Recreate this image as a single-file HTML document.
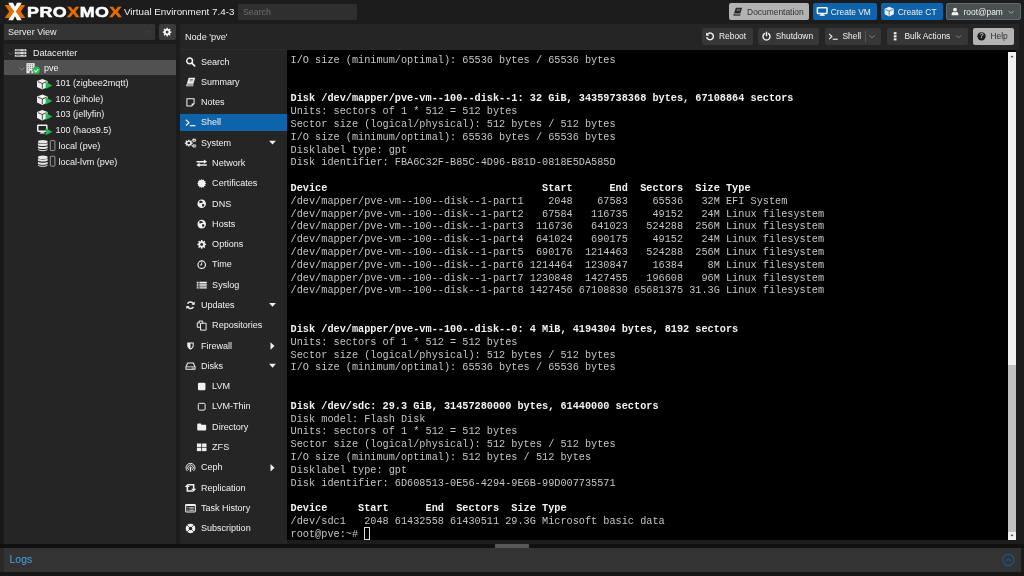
<!DOCTYPE html>
<html lang="en"><head><meta charset="utf-8"><title>pve - Proxmox Virtual Environment</title>
<style>
*{box-sizing:border-box;margin:0;padding:0}
html,body{width:1024px;height:576px;overflow:hidden;background:#1c1c1c}
body{position:relative;font-family:"Liberation Sans",Arial,sans-serif;font-size:9.05px;color:#f2f2f2;line-height:1}
.abs{position:absolute}
.t{position:absolute;white-space:pre;line-height:12px;height:12px}
.btn{position:absolute;border-radius:2px;height:16.5px}
.term{position:absolute;white-space:pre;font-family:"Liberation Mono","Courier New",monospace;font-size:10.22px;line-height:13px;height:13px;color:#c6c6c6;left:290.6px}
.term b{font-weight:bold;color:#f4f4f4}
svg{position:absolute;overflow:visible}
</style></head>
<body>
<div id="app" style="position:absolute;left:0;top:0;width:1024px;height:576px;will-change:transform;opacity:0.999">
<div class="abs" style="left:0px;top:23.5px;width:3.3px;height:521px;background:#191919;"></div>
<div class="abs" style="left:238px;top:3.5px;width:119px;height:16.5px;background:#303030;border-radius:1px"></div>
<div class="t" style="left:243px;top:6px;font-size:8.8px;color:#707070;">Search</div>
<div class="t" style="left:124px;top:5.5px;font-size:9.81px;color:#f0f0f0;">Virtual Environment 7.4-3</div>
<div class="abs" id="logo" style="left:27.3px;top:3.1px;height:18px;line-height:18px;font-size:15.4px;font-weight:bold;white-space:pre;letter-spacing:0.45px;-webkit-text-stroke:0.55px;transform-origin:0 50%;transform:scaleX(1.16);color:#fff">PRO<span style="color:#e57000">X</span>MO<span style="color:#e57000">X</span></div>
<div class="abs" style="left:3.5px;top:23.7px;width:151.5px;height:16.5px;background:#353535;border-radius:1px"></div>
<div class="t" style="left:8px;top:26px;font-size:9.05px;color:#efefef;">Server View</div>
<div class="abs" style="left:158.8px;top:23.9px;width:16.8px;height:16.5px;background:#3b3b3b;border-radius:2px"></div>
<div class="abs" style="left:3.5px;top:43.7px;width:172.5px;height:501.5px;background:#262626;"></div>
<div class="abs" style="left:3.5px;top:59.8px;width:172.5px;height:15.6px;background:#525252;"></div>
<div class="t" style="left:33px;top:47px;font-size:9.05px;color:#f2f2f2;">Datacenter</div>
<div class="t" style="left:44px;top:61.8px;font-size:9.05px;color:#f2f2f2;">pve</div>
<div class="t" style="left:55.5px;top:77.3px;font-size:9.05px;color:#f2f2f2;">101 (zigbee2mqtt)</div>
<div class="t" style="left:55.5px;top:92.8px;font-size:9.05px;color:#f2f2f2;">102 (pihole)</div>
<div class="t" style="left:55.5px;top:108.3px;font-size:9.05px;color:#f2f2f2;">103 (jellyfin)</div>
<div class="t" style="left:55.5px;top:123.80000000000001px;font-size:9.05px;color:#f2f2f2;">100 (haos9.5)</div>
<div class="t" style="left:58.5px;top:140px;font-size:9.05px;color:#f2f2f2;">local (pve)</div>
<div class="t" style="left:58.5px;top:155.6px;font-size:9.05px;color:#f2f2f2;">local-lvm (pve)</div>
<div class="abs" style="left:179.6px;top:23.9px;width:839.7px;height:26px;background:#262626;"></div>
<div class="t" style="left:184.9px;top:30.6px;font-size:9.16px;color:#f0f0f0;">Node &#x27;pve&#x27;</div>
<div class="abs" style="left:179.6px;top:49.5px;width:107.2px;height:494.9px;background:#262626;"></div>
<div class="abs" style="left:179.6px;top:49.3px;width:107.2px;height:0.8px;background:#2d2d2d;"></div>
<div class="abs" style="left:286.8px;top:49.8px;width:729.4px;height:490.2px;background:#000;"></div>
<div class="abs" style="left:179.5px;top:114.1px;width:107.3px;height:16.6px;background:#0f65ab;"></div>
<div class="t" style="left:200.9px;top:55.5px;font-size:9.05px;color:#f2f2f2;">Search</div>
<div class="t" style="left:200.9px;top:75.78999999999999px;font-size:9.05px;color:#f2f2f2;">Summary</div>
<div class="t" style="left:200.9px;top:96.08px;font-size:9.05px;color:#f2f2f2;">Notes</div>
<div class="t" style="left:200.9px;top:116.37px;font-size:9.05px;color:#f2f2f2;">Shell</div>
<div class="t" style="left:200.9px;top:136.66px;font-size:9.05px;color:#f2f2f2;">System</div>
<div class="t" style="left:212.1px;top:156.95px;font-size:9.05px;color:#f2f2f2;">Network</div>
<div class="t" style="left:212.1px;top:177.24px;font-size:9.05px;color:#f2f2f2;">Certificates</div>
<div class="t" style="left:212.1px;top:197.53px;font-size:9.05px;color:#f2f2f2;">DNS</div>
<div class="t" style="left:212.1px;top:217.82px;font-size:9.05px;color:#f2f2f2;">Hosts</div>
<div class="t" style="left:212.1px;top:238.10999999999999px;font-size:9.05px;color:#f2f2f2;">Options</div>
<div class="t" style="left:212.1px;top:258.4px;font-size:9.05px;color:#f2f2f2;">Time</div>
<div class="t" style="left:212.1px;top:278.69px;font-size:9.05px;color:#f2f2f2;">Syslog</div>
<div class="t" style="left:200.9px;top:298.98px;font-size:9.05px;color:#f2f2f2;">Updates</div>
<div class="t" style="left:212.1px;top:319.27px;font-size:9.05px;color:#f2f2f2;">Repositories</div>
<div class="t" style="left:200.9px;top:339.56px;font-size:9.05px;color:#f2f2f2;">Firewall</div>
<div class="t" style="left:200.9px;top:359.84999999999997px;font-size:9.05px;color:#f2f2f2;">Disks</div>
<div class="t" style="left:212.1px;top:380.14px;font-size:9.05px;color:#f2f2f2;">LVM</div>
<div class="t" style="left:212.1px;top:400.43px;font-size:9.05px;color:#f2f2f2;">LVM-Thin</div>
<div class="t" style="left:212.1px;top:420.71999999999997px;font-size:9.05px;color:#f2f2f2;">Directory</div>
<div class="t" style="left:212.1px;top:441.01px;font-size:9.05px;color:#f2f2f2;">ZFS</div>
<div class="t" style="left:200.9px;top:461.29999999999995px;font-size:9.05px;color:#f2f2f2;">Ceph</div>
<div class="t" style="left:200.9px;top:481.59px;font-size:9.05px;color:#f2f2f2;">Replication</div>
<div class="t" style="left:200.9px;top:501.88px;font-size:9.05px;color:#f2f2f2;">Task History</div>
<div class="t" style="left:200.9px;top:522.17px;font-size:9.05px;color:#f2f2f2;">Subscription</div>
<div class="abs" style="left:729.2px;top:3.2px;width:80px;height:16.8px;background:#b4b4b4;border-radius:2px;"></div>
<div class="t" style="left:747.1px;top:5.800000000000001px;font-size:8.42px;color:#333;">Documentation</div>
<div class="abs" style="left:813.2px;top:3.2px;width:63.8px;height:16.8px;background:#1064ac;border-radius:2px;"></div>
<div class="t" style="left:830.7px;top:5.800000000000001px;font-size:8.42px;color:#f2f2f2;">Create VM</div>
<div class="abs" style="left:880.6px;top:3.2px;width:62.4px;height:16.8px;background:#1064ac;border-radius:2px;"></div>
<div class="t" style="left:897.8px;top:5.800000000000001px;font-size:8.42px;color:#f2f2f2;">Create CT</div>
<div class="abs" style="left:946.2px;top:3.3px;width:74.8px;height:16.8px;background:#495152;border-radius:2px;border:1px solid #626a6b;"></div>
<div class="t" style="left:963.5px;top:5.899999999999999px;font-size:8.42px;color:#f2f2f2;">root@pam</div>
<div class="abs" style="left:701.5px;top:28px;width:51px;height:16.5px;background:#383838;border-radius:2px;"></div>
<div class="t" style="left:719px;top:30.450000000000003px;font-size:8.42px;color:#f2f2f2;">Reboot</div>
<div class="abs" style="left:758px;top:28px;width:61px;height:16.5px;background:#383838;border-radius:2px;"></div>
<div class="t" style="left:775.7px;top:30.450000000000003px;font-size:8.42px;color:#f2f2f2;">Shutdown</div>
<div class="abs" style="left:825px;top:28px;width:55.6px;height:16.5px;background:#383838;border-radius:2px;"></div>
<div class="t" style="left:842.5px;top:30.450000000000003px;font-size:8.42px;color:#f2f2f2;">Shell</div>
<div class="abs" style="left:887px;top:28px;width:81px;height:16.5px;background:#383838;border-radius:2px;"></div>
<div class="t" style="left:904.5px;top:30.450000000000003px;font-size:8.42px;color:#f2f2f2;">Bulk Actions</div>
<div class="abs" style="left:973px;top:28px;width:41.2px;height:16.5px;background:#b4b4b4;border-radius:2px;"></div>
<div class="t" style="left:990.4px;top:30.450000000000003px;font-size:8.42px;color:#333;">Help</div>
<div class="abs" style="left:865.2px;top:30.5px;width:0.8px;height:11.5px;background:#5a5a5a;"></div>
<div class="t" style="left:979.3px;top:30.4px;font-size:7.6px;font-weight:bold;color:#b4b4b4;z-index:3">?</div>
<div class="abs" style="left:1007.9px;top:52.3px;width:8.3px;height:487.4px;background:#f1f1f1;"></div>
<div class="abs" style="left:1007.9px;top:364.6px;width:8.3px;height:167.2px;background:#c1c1c1;"></div>
<div class="abs" style="left:1007.9px;top:531.7px;width:8.3px;height:8px;background:#f1f1f1;"></div>
<div class="term" style="top:53.90px">I/O size (minimum/optimal): 65536 bytes / 65536 bytes</div>
<div class="term" style="top:92.33px"><b>Disk /dev/mapper/pve-vm--100--disk--1: 32 GiB, 34359738368 bytes, 67108864 sectors</b></div>
<div class="term" style="top:105.14px">Units: sectors of 1 * 512 = 512 bytes</div>
<div class="term" style="top:117.95px">Sector size (logical/physical): 512 bytes / 512 bytes</div>
<div class="term" style="top:130.76px">I/O size (minimum/optimal): 65536 bytes / 65536 bytes</div>
<div class="term" style="top:143.57px">Disklabel type: gpt</div>
<div class="term" style="top:156.38px">Disk identifier: FBA6C32F-B85C-4D96-B81D-0818E5DA585D</div>
<div class="term" style="top:182.00px"><b>Device                                   Start      End  Sectors  Size Type</b></div>
<div class="term" style="top:194.81px">/dev/mapper/pve-vm--100--disk--1-part1    2048    67583    65536   32M EFI System</div>
<div class="term" style="top:207.62px">/dev/mapper/pve-vm--100--disk--1-part2   67584   116735    49152   24M Linux filesystem</div>
<div class="term" style="top:220.43px">/dev/mapper/pve-vm--100--disk--1-part3  116736   641023   524288  256M Linux filesystem</div>
<div class="term" style="top:233.24px">/dev/mapper/pve-vm--100--disk--1-part4  641024   690175    49152   24M Linux filesystem</div>
<div class="term" style="top:246.05px">/dev/mapper/pve-vm--100--disk--1-part5  690176  1214463   524288  256M Linux filesystem</div>
<div class="term" style="top:258.86px">/dev/mapper/pve-vm--100--disk--1-part6 1214464  1230847    16384    8M Linux filesystem</div>
<div class="term" style="top:271.67px">/dev/mapper/pve-vm--100--disk--1-part7 1230848  1427455   196608   96M Linux filesystem</div>
<div class="term" style="top:284.48px">/dev/mapper/pve-vm--100--disk--1-part8 1427456 67108830 65681375 31.3G Linux filesystem</div>
<div class="term" style="top:322.91px"><b>Disk /dev/mapper/pve-vm--100--disk--0: 4 MiB, 4194304 bytes, 8192 sectors</b></div>
<div class="term" style="top:335.72px">Units: sectors of 1 * 512 = 512 bytes</div>
<div class="term" style="top:348.53px">Sector size (logical/physical): 512 bytes / 512 bytes</div>
<div class="term" style="top:361.34px">I/O size (minimum/optimal): 65536 bytes / 65536 bytes</div>
<div class="term" style="top:399.77px"><b>Disk /dev/sdc: 29.3 GiB, 31457280000 bytes, 61440000 sectors</b></div>
<div class="term" style="top:412.58px">Disk model: Flash Disk</div>
<div class="term" style="top:425.39px">Units: sectors of 1 * 512 = 512 bytes</div>
<div class="term" style="top:438.20px">Sector size (logical/physical): 512 bytes / 512 bytes</div>
<div class="term" style="top:451.01px">I/O size (minimum/optimal): 512 bytes / 512 bytes</div>
<div class="term" style="top:463.82px">Disklabel type: gpt</div>
<div class="term" style="top:476.63px">Disk identifier: 6D608513-0E56-4294-9E6B-99D007735571</div>
<div class="term" style="top:502.25px"><b>Device     Start      End  Sectors  Size Type</b></div>
<div class="term" style="top:515.06px">/dev/sdc1   2048 61432558 61430511 29.3G Microsoft basic data</div>
<div class="term" style="top:527.87px">root@pve:~# </div>
<div class="abs" style="left:363.7px;top:527px;width:6.6px;height:12.6px;background:transparent;border:1px solid #dcdcdc"></div>
<div class="abs" style="left:0px;top:544.4px;width:1024px;height:3.3px;background:#121212;"></div>
<div class="abs" style="left:0px;top:547.7px;width:3.5px;height:24.6px;background:#2a2a2a;"></div>
<div class="abs" style="left:3.5px;top:547.7px;width:1017px;height:24.6px;background:#343434;"></div>
<div class="abs" style="left:0px;top:572.3px;width:1024px;height:3.7px;background:#181818;"></div>
<div class="t" style="left:9.6px;top:554px;font-size:10.4px;color:#4aa3df;">Logs</div>
<div class="abs" style="left:494.8px;top:544.1px;width:34.2px;height:3.8px;background:#585858;border-radius:1px 1px 0 0;z-index:1"></div>
<svg style="left:0;top:0" width="1024" height="576" viewBox="0 0 1024 576">
<polygon points="8.3,2.8 13,2.8 21.7,20.3 17,20.3" fill="#ffffff"/>
<polygon points="21.7,2.8 17,2.8 8.3,20.3 13,20.3" fill="#ffffff"/>
<polygon points="4.7,5 9.7,5 14.2,11.5 9.7,18 4.7,18 9.2,11.5" fill="#e57000"/>
<polygon points="25.3,5 20.3,5 15.8,11.5 20.3,18 25.3,18 20.8,11.5" fill="#e57000"/>
<g transform="translate(7.50 50.40) scale(0.4000 0.4000)"><path d="M2 5L8 11L14 5" stroke="#686868" fill="none" stroke-width="1.8"/></g>
<g transform="translate(18.50 65.70) scale(0.4125 0.4125)"><path d="M2 5L8 11L14 5" stroke="#989898" fill="none" stroke-width="1.8"/></g>
<g transform="translate(14.30 48.46) scale(0.7875 0.5670)"><rect x="0.6" y="1.4" width="14.8" height="3.6" rx="0.6" fill="#dcdcdc"/><rect x="0.6" y="6.2" width="14.8" height="3.6" rx="0.6" fill="#dcdcdc"/><rect x="0.6" y="11" width="14.8" height="3.6" rx="0.6" fill="#dcdcdc"/><path d="M2 3.2H8M2 8H8M2 12.8H8" stroke="#555" stroke-width="1"/><path d="M11.4 3.2H13.6M11.4 8H13.6M11.4 12.8H13.6" stroke="#555" stroke-width="1"/></g>
<g transform="translate(25.30 62.70) scale(0.6875 0.6875)"><rect x="1.6" y="0.6" width="12" height="14.8" fill="#e8e8e8"/><path d="M3.6 3H5M6.6 3H8M9.6 3H11M3.6 5.6H5M6.6 5.6H8M9.6 5.6H11M3.6 8.2H5M6.6 8.2H8M9.6 8.2H11M3.6 10.8H5M9.6 10.8H11" stroke="#555" stroke-width="1.2"/><rect x="6.4" y="11.6" width="2.4" height="3.8" fill="#555"/></g>
<circle cx="36.3" cy="70.3" r="3.7" fill="#21bf4b"/><path d="M34.3 70.4L35.8 71.9L38.4 69" stroke="#fff" stroke-width="1.1" fill="none"/>
<g transform="translate(36.10 78.31) scale(0.7750 0.7362)"><path d="M8 0.8L14.8 3.6V11.8L8 15.2L1.2 11.8V3.6Z" fill="#f2f2f2"/><path d="M2.4 4.6L8 7L13.6 4.6M8 7V14" stroke="#262626" stroke-width="1.1" fill="none"/></g>
<polygon points="45.6,82.0 52.4,85.5 45.6,89.0" fill="#21bf4b"/>
<g transform="translate(36.10 93.81) scale(0.7750 0.7362)"><path d="M8 0.8L14.8 3.6V11.8L8 15.2L1.2 11.8V3.6Z" fill="#f2f2f2"/><path d="M2.4 4.6L8 7L13.6 4.6M8 7V14" stroke="#262626" stroke-width="1.1" fill="none"/></g>
<polygon points="45.6,97.5 52.4,101.0 45.6,104.5" fill="#21bf4b"/>
<g transform="translate(36.10 109.31) scale(0.7750 0.7362)"><path d="M8 0.8L14.8 3.6V11.8L8 15.2L1.2 11.8V3.6Z" fill="#f2f2f2"/><path d="M2.4 4.6L8 7L13.6 4.6M8 7V14" stroke="#262626" stroke-width="1.1" fill="none"/></g>
<polygon points="45.6,113.0 52.4,116.5 45.6,120.0" fill="#21bf4b"/>
<g transform="translate(37.10 124.00) scale(0.6500 0.6500)"><rect x="1" y="1.8" width="14" height="9.2" rx="1" stroke="#f2f2f2" fill="none" stroke-width="2.3"/><path d="M6 11.4L5.4 13.6H10.6L10 11.4Z" fill="#f2f2f2"/><path d="M4.2 14H11.8" stroke="#f2f2f2" fill="none" stroke-width="1.4"/></g>
<polygon points="45.6,128.2 52.4,131.7 45.6,135.2" fill="#21bf4b"/>
<g transform="translate(36.70 139.50) scale(0.7625 0.7625)"><ellipse cx="8" cy="3" rx="6.4" ry="2.4" fill="#e8e8e8"/><path d="M1.6 4.6C3 6.4 13 6.4 14.4 4.6V7.2C13 9 3 9 1.6 7.2Z" fill="#e8e8e8"/><path d="M1.6 8.6C3 10.4 13 10.4 14.4 8.6V11.2C13 13 3 13 1.6 11.2Z" fill="#e8e8e8"/><path d="M1.6 12.6C3 14.4 13 14.4 14.4 12.6V13.6C13 16 3 16 1.6 13.6Z" fill="#e8e8e8"/></g>
<rect x="50.3" y="140.6" width="4.6" height="10" rx="0.8" fill="none" stroke="#a8a8a8" stroke-width="0.9"/>
<g transform="translate(36.70 155.10) scale(0.7625 0.7625)"><ellipse cx="8" cy="3" rx="6.4" ry="2.4" fill="#e8e8e8"/><path d="M1.6 4.6C3 6.4 13 6.4 14.4 4.6V7.2C13 9 3 9 1.6 7.2Z" fill="#e8e8e8"/><path d="M1.6 8.6C3 10.4 13 10.4 14.4 8.6V11.2C13 13 3 13 1.6 11.2Z" fill="#e8e8e8"/><path d="M1.6 12.6C3 14.4 13 14.4 14.4 12.6V13.6C13 16 3 16 1.6 13.6Z" fill="#e8e8e8"/></g>
<rect x="50.3" y="156.2" width="4.6" height="10" rx="0.8" fill="none" stroke="#a8a8a8" stroke-width="0.9"/>
<g transform="translate(185.50 56.80) scale(0.6250 0.6250)"><circle cx="6.6" cy="6.6" r="4.6" stroke="#f2f2f2" fill="none" stroke-width="2.3"/><path d="M10.2 10.2L14.6 14.6" stroke="#f2f2f2" fill="none" stroke-width="2.8" stroke-linecap="round"/></g>
<g transform="translate(185.30 76.89) scale(0.6500 0.6500)"><path d="M5.2 1.5H15.2L12.4 10.6H2.4Z" fill="#f2f2f2"/><path d="M2 11.2H12.6L12 14.5H3C1.2 14.5 0.8 12.4 2 11.2Z" fill="#f2f2f2"/><path d="M3.2 12.9H11.6" stroke="#262626" stroke-width="0.9"/><path d="M6.8 4.2H12.2M6.2 6.2H11.6" stroke="#262626" stroke-width="0.8"/></g>
<g transform="translate(185.70 97.58) scale(0.6000 0.6000)"><path d="M2 2H14V10L10 14H2Z" stroke="#f2f2f2" fill="none" stroke-width="1.7" stroke-linejoin="round"/><path d="M10 14V10H14Z" fill="#f2f2f2"/></g>
<g transform="translate(185.30 117.47) scale(0.6500 0.6500)"><path d="M1 3.6L5.6 8L1 12.4" stroke="#f2f2f2" fill="none" stroke-width="1.9"/><path d="M7 12.6H15.6" stroke="#f2f2f2" fill="none" stroke-width="1.9"/></g>
<g transform="translate(184.70 138.03) scale(0.7250 0.6162)"><path d="M9.58 7.20 L11.13 7.32 L11.13 9.08 L9.58 9.20 L9.12 10.31 L10.13 11.49 L8.89 12.73 L7.71 11.72 L6.60 12.18 L6.48 13.73 L4.72 13.73 L4.60 12.18 L3.49 11.72 L2.31 12.73 L1.07 11.49 L2.08 10.31 L1.62 9.20 L0.07 9.08 L0.07 7.32 L1.62 7.20 L2.08 6.09 L1.07 4.91 L2.31 3.67 L3.49 4.68 L4.60 4.22 L4.72 2.67 L6.48 2.67 L6.60 4.22 L7.71 4.68 L8.89 3.67 L10.13 4.91 L9.12 6.09Z M7.60 8.20 A2.0 2.0 0 1 0 3.60 8.20 A2.0 2.0 0 1 0 7.60 8.20Z" fill="#f2f2f2" fill-rule="evenodd"/><path d="M15.11 2.99 L16.05 3.05 L16.05 4.15 L15.11 4.21 L14.79 4.87 L15.33 5.64 L14.47 6.33 L13.84 5.63 L13.12 5.80 L12.86 6.70 L11.78 6.45 L11.94 5.53 L11.36 5.07 L10.49 5.42 L10.01 4.42 L10.83 3.97 L10.83 3.23 L10.01 2.78 L10.49 1.78 L11.36 2.13 L11.94 1.67 L11.78 0.75 L12.86 0.50 L13.12 1.40 L13.84 1.57 L14.47 0.87 L15.33 1.56 L14.79 2.33Z M14.00 3.60 A1.0 1.0 0 1 0 12.00 3.60 A1.0 1.0 0 1 0 14.00 3.60Z" fill="#f2f2f2" fill-rule="evenodd"/><path d="M15.11 12.19 L16.05 12.25 L16.05 13.35 L15.11 13.41 L14.79 14.07 L15.33 14.84 L14.47 15.53 L13.84 14.83 L13.12 15.00 L12.86 15.90 L11.78 15.65 L11.94 14.73 L11.36 14.27 L10.49 14.62 L10.01 13.62 L10.83 13.17 L10.83 12.43 L10.01 11.98 L10.49 10.98 L11.36 11.33 L11.94 10.87 L11.78 9.95 L12.86 9.70 L13.12 10.60 L13.84 10.77 L14.47 10.07 L15.33 10.76 L14.79 11.53Z M14.00 12.80 A1.0 1.0 0 1 0 12.00 12.80 A1.0 1.0 0 1 0 14.00 12.80Z" fill="#f2f2f2" fill-rule="evenodd"/></g>
<polygon points="269.10,140.66 275.90,140.66 272.50,144.46" fill="#f2f2f2"/>
<g transform="translate(196.00 158.97) scale(0.7125 0.5344)"><path d="M0.8 3.6H11V1L15.6 5L11 9V6.4H0.8Z" fill="#f2f2f2"/><path d="M15.2 9.8H5V7.2L0.4 11.2L5 15.2V12.6H15.2Z" fill="#f2f2f2"/></g>
<g transform="translate(197.00 178.84) scale(0.5875 0.5875)"><path d="M15.80 8.00 L13.80 9.55 L14.75 11.90 L12.24 12.24 L11.90 14.75 L9.55 13.80 L8.00 15.80 L6.45 13.80 L4.10 14.75 L3.76 12.24 L1.25 11.90 L2.20 9.55 L0.20 8.00 L2.20 6.45 L1.25 4.10 L3.76 3.76 L4.10 1.25 L6.45 2.20 L8.00 0.20 L9.55 2.20 L11.90 1.25 L12.24 3.76 L14.75 4.10 L13.80 6.45Z" fill="#f2f2f2"/></g>
<g transform="translate(197.10 199.23) scale(0.5750 0.5750)"><circle cx="8" cy="8" r="7.4" fill="#f2f2f2"/><path d="M5 2.2C7 3 9 2.6 10 4.2C10.6 5.6 9 6.4 7.6 6.2C6.4 6.2 6 7.4 4.6 7C3.4 6.4 3.6 3.6 5 2.2Z" fill="#262626"/><path d="M9.4 8.4C11 8 13 9 12.6 10.6C12.2 12 11 13.4 10 13.6C9.2 12.8 9.6 11.6 8.8 10.8C8.2 10 8.6 8.8 9.4 8.4Z" fill="#262626"/></g>
<g transform="translate(197.10 219.52) scale(0.5750 0.5750)"><circle cx="8" cy="8" r="7.4" fill="#f2f2f2"/><path d="M5 2.2C7 3 9 2.6 10 4.2C10.6 5.6 9 6.4 7.6 6.2C6.4 6.2 6 7.4 4.6 7C3.4 6.4 3.6 3.6 5 2.2Z" fill="#262626"/><path d="M9.4 8.4C11 8 13 9 12.6 10.6C12.2 12 11 13.4 10 13.6C9.2 12.8 9.6 11.6 8.8 10.8C8.2 10 8.6 8.8 9.4 8.4Z" fill="#262626"/></g>
<g transform="translate(197.00 239.71) scale(0.5875 0.5875)"><path d="M13.43 6.64 L15.51 6.81 L15.51 9.19 L13.43 9.36 L12.80 10.88 L14.15 12.47 L12.47 14.15 L10.88 12.80 L9.36 13.43 L9.19 15.51 L6.81 15.51 L6.64 13.43 L5.12 12.80 L3.53 14.15 L1.85 12.47 L3.20 10.88 L2.57 9.36 L0.49 9.19 L0.49 6.81 L2.57 6.64 L3.20 5.12 L1.85 3.53 L3.53 1.85 L5.12 3.20 L6.64 2.57 L6.81 0.49 L9.19 0.49 L9.36 2.57 L10.88 3.20 L12.47 1.85 L14.15 3.53 L12.80 5.12Z M10.50 8.00 A2.5 2.5 0 1 0 5.50 8.00 A2.5 2.5 0 1 0 10.50 8.00Z" fill="#f2f2f2" fill-rule="evenodd"/></g>
<g transform="translate(197.00 260.00) scale(0.5875 0.5875)"><circle cx="8" cy="8" r="6.4" stroke="#f2f2f2" fill="none" stroke-width="2"/><path d="M8 4.2V8.4H5" stroke="#f2f2f2" fill="none" stroke-width="1.6"/></g>
<g transform="translate(196.20 280.70) scale(0.6875 0.5363)"><path d="M0.8 3H3.4M0.8 6.4H3.4M0.8 9.8H3.4M0.8 13.2H3.4" stroke="#f2f2f2" fill="none" stroke-width="2.3"/><path d="M4.6 3H15.4M4.6 6.4H15.4M4.6 9.8H15.4M4.6 13.2H15.4" stroke="#f2f2f2" fill="none" stroke-width="2.3"/></g>
<g transform="translate(185.70 300.48) scale(0.6000 0.6000)"><path d="M13.4 6.2A5.8 5.8 0 0 0 3 5.4" stroke="#f2f2f2" fill="none" stroke-width="2.4"/><path d="M2.6 9.8A5.8 5.8 0 0 0 13 10.6" stroke="#f2f2f2" fill="none" stroke-width="2.4"/><path d="M15 1.6V7H9.6Z" fill="#f2f2f2"/><path d="M1 14.4V9H6.4Z" fill="#f2f2f2"/></g>
<polygon points="269.10,302.98 275.90,302.98 272.50,306.78" fill="#f2f2f2"/>
<g transform="translate(196.50 320.37) scale(0.6500 0.6500)"><path d="M6.2 4.4H14.8V15H6.2Z" stroke="#f2f2f2" fill="none" stroke-width="1.5" stroke-linejoin="round"/><path d="M6.2 10.6H1.2V4L4.4 1H9.6V4.4" stroke="#f2f2f2" fill="none" stroke-width="1.5" stroke-linejoin="round"/><path d="M1.4 4.2H4.6V1.2" stroke="#f2f2f2" fill="none" stroke-width="1.2"/></g>
<g transform="translate(186.20 341.56) scale(0.5375 0.5375)"><path d="M2 1.6H14V8C14 11.4 11 13.8 8 15.2C5 13.8 2 11.4 2 8Z" fill="#f2f2f2"/><path d="M8 3.6H12V8C12 10 10.2 11.8 8 13Z" fill="#262626"/></g>
<polygon points="270.50,342.26 274.50,345.96 270.50,349.66" fill="#f2f2f2"/>
<g transform="translate(185.30 361.47) scale(0.6500 0.5850)"><path d="M3.6 2.6H12.4L15 9.2V13.4H1V9.2Z" stroke="#f2f2f2" fill="none" stroke-width="1.6" stroke-linejoin="round"/><path d="M1.4 9.2H14.6" stroke="#f2f2f2" fill="none" stroke-width="1.4"/><path d="M10 11.4H13" stroke="#f2f2f2" fill="none" stroke-width="1.3"/></g>
<polygon points="269.10,363.85 275.90,363.85 272.50,367.65" fill="#f2f2f2"/>
<g transform="translate(197.00 381.74) scale(0.5875 0.5875)"><rect x="1.6" y="1.6" width="12.8" height="12.8" rx="2.2" fill="#f2f2f2"/></g>
<g transform="translate(197.00 402.03) scale(0.5875 0.5875)"><rect x="2.2" y="2.2" width="11.6" height="11.6" rx="2" stroke="#f2f2f2" fill="none" stroke-width="1.7"/></g>
<g transform="translate(196.60 422.43) scale(0.6375 0.5737)"><path d="M1 3.4C1 2.6 1.6 2 2.4 2H6C6.8 2 7.4 2.6 7.4 3.4V4H13.6C14.4 4 15 4.6 15 5.4V12.6C15 13.4 14.4 14 13.6 14H2.4C1.6 14 1 13.4 1 12.6Z" fill="#f2f2f2"/></g>
<g transform="translate(196.40 442.54) scale(0.6625 0.5962)"><rect x="0.8" y="1.6" width="6.6" height="5.8" fill="#f2f2f2"/><rect x="8.6" y="1.6" width="6.6" height="5.8" fill="#f2f2f2"/><rect x="0.8" y="8.6" width="6.6" height="5.8" fill="#f2f2f2"/><rect x="8.6" y="8.6" width="6.6" height="5.8" fill="#f2f2f2"/></g>
<g transform="translate(185.40 462.50) scale(0.6375 0.6375)"><path d="M3.2 13.4A7 7 0 1 1 12.8 13.4" stroke="#f2f2f2" fill="none" stroke-width="1.5"/><path d="M5.4 11.6A4.3 4.3 0 1 1 10.6 11.6" stroke="#f2f2f2" fill="none" stroke-width="1.5"/><path d="M8 8.2V14.6" stroke="#f2f2f2" fill="none" stroke-width="2"/><circle cx="8" cy="8" r="1.7" fill="#f2f2f2"/></g>
<polygon points="270.50,464.00 274.50,467.70 270.50,471.40" fill="#f2f2f2"/>
<g transform="translate(184.90 482.29) scale(0.7000 0.7000)"><path d="M0 6.7L3.5 2.4L7 6.7H4.6V11.3H10.4L12.2 13.6H2.4V6.7Z" fill="#f2f2f2"/><path d="M16 9.3L12.5 13.6L9 9.3H11.4V4.7H5.6L3.8 2.4H13.6V9.3Z" fill="#f2f2f2"/></g>
<g transform="translate(185.00 503.23) scale(0.6875 0.6188)"><rect x="1" y="2" width="14" height="12" rx="1" stroke="#f2f2f2" fill="none" stroke-width="1.6"/><path d="M1 3.4H15" stroke="#f2f2f2" fill="none" stroke-width="2.2"/><path d="M3.4 6.8H5M3.4 9.2H5M3.4 11.6H5M6.2 6.8H12.8M6.2 9.2H12.8M6.2 11.6H12.8" stroke="#f2f2f2" fill="none" stroke-width="1.1"/></g>
<g transform="translate(185.30 523.27) scale(0.6500 0.6500)"><circle cx="8" cy="8" r="5.1" stroke="#f2f2f2" fill="none" stroke-width="4.6"/><path d="M2.6 2.6L6 6M13.4 2.6L10 6M2.6 13.4L6 10M13.4 13.4L10 10" stroke="#262626" stroke-width="1.1"/></g>
<g transform="translate(732.60 6.70) scale(0.6250 0.6250)"><path d="M5.2 1.5H15.2L12.4 10.6H2.4Z" fill="#262626"/><path d="M2 11.2H12.6L12 14.5H3C1.2 14.5 0.8 12.4 2 11.2Z" fill="#262626"/><path d="M3.2 12.9H11.6" stroke="#b4b4b4" stroke-width="0.9"/><path d="M6.8 4.2H12.2M6.2 6.2H11.6" stroke="#b4b4b4" stroke-width="0.8"/></g>
<g transform="translate(816.70 6.54) scale(0.6875 0.6325)"><rect x="1" y="1.8" width="14" height="9.2" rx="1" stroke="#f2f2f2" fill="none" stroke-width="2.3"/><path d="M6 11.4L5.4 13.6H10.6L10 11.4Z" fill="#f2f2f2"/><path d="M4.2 14H11.8" stroke="#f2f2f2" fill="none" stroke-width="1.4"/></g>
<g transform="translate(883.80 6.30) scale(0.6750 0.6750)"><path d="M8 0.8L14.8 3.6V11.8L8 15.2L1.2 11.8V3.6Z" fill="#f2f2f2"/><path d="M2.4 4.6L8 7L13.6 4.6M8 7V14" stroke="#1064ac" stroke-width="1.1" fill="none"/></g>
<g transform="translate(950.50 7.10) scale(0.5625 0.5625)"><circle cx="8" cy="4.4" r="3.4" fill="#f2f2f2"/><path d="M1.8 14.6C1.8 10.6 3.6 8.6 5.4 8.4C6.2 9 7 9.3 8 9.3C9 9.3 9.8 9 10.6 8.4C12.4 8.6 14.2 10.6 14.2 14.6Z" fill="#f2f2f2"/></g>
<g transform="translate(1007.90 8.90) scale(0.4125 0.4125)"><path d="M2 5L8 11L14 5" stroke="#b4b4b4" fill="none" stroke-width="2.2"/></g>
<g transform="translate(705.50 31.80) scale(0.5625 0.5625)"><path d="M3.4 4.2A6 6 0 1 1 2.2 9.4" stroke="#f2f2f2" fill="none" stroke-width="2.6"/><path d="M1 1.4V7H6.6Z" fill="#f2f2f2"/></g>
<g transform="translate(761.80 31.50) scale(0.5875 0.5875)"><path d="M4.6 3.6A6 6 0 1 0 11.4 3.6" stroke="#f2f2f2" fill="none" stroke-width="2.4" stroke-linecap="round"/><path d="M8 1V7.4" stroke="#f2f2f2" fill="none" stroke-width="2.4" stroke-linecap="round"/></g>
<g transform="translate(828.60 31.80) scale(0.5875 0.5875)"><path d="M1 3.6L5.6 8L1 12.4" stroke="#f2f2f2" fill="none" stroke-width="1.9"/><path d="M7 12.6H15.6" stroke="#f2f2f2" fill="none" stroke-width="1.9"/></g>
<g transform="translate(868.60 33.20) scale(0.4250 0.4250)"><path d="M2 5L8 11L14 5" stroke="#8c8c8c" fill="none" stroke-width="2.2"/></g>
<g transform="translate(890.50 31.60) scale(0.5875 0.5875)"><rect x="5.6" y="1" width="4.6" height="3.6" fill="#f2f2f2"/><rect x="5.6" y="6.2" width="4.6" height="3.6" fill="#f2f2f2"/><rect x="5.6" y="11.4" width="4.6" height="3.6" fill="#f2f2f2"/></g>
<g transform="translate(955.20 33.20) scale(0.4250 0.4250)"><path d="M2 5L8 11L14 5" stroke="#8c8c8c" fill="none" stroke-width="2.2"/></g>
<g transform="translate(977.00 31.80) scale(0.5625 0.5625)"><circle cx="8" cy="8" r="7.4" fill="#1f1f1f"/></g>
<g transform="translate(162.50 27.50) scale(0.5750 0.5750)"><path d="M13.43 6.64 L15.51 6.81 L15.51 9.19 L13.43 9.36 L12.80 10.88 L14.15 12.47 L12.47 14.15 L10.88 12.80 L9.36 13.43 L9.19 15.51 L6.81 15.51 L6.64 13.43 L5.12 12.80 L3.53 14.15 L1.85 12.47 L3.20 10.88 L2.57 9.36 L0.49 9.19 L0.49 6.81 L2.57 6.64 L3.20 5.12 L1.85 3.53 L3.53 1.85 L5.12 3.20 L6.64 2.57 L6.81 0.49 L9.19 0.49 L9.36 2.57 L10.88 3.20 L12.47 1.85 L14.15 3.53 L12.80 5.12Z M10.50 8.00 A2.5 2.5 0 1 0 5.50 8.00 A2.5 2.5 0 1 0 10.50 8.00Z" fill="#f8f8f8" fill-rule="evenodd"/></g>
<g transform="translate(144.30 28.80) scale(0.3500 0.3500)"><path d="M2 5L8 11L14 5" stroke="#565656" fill="none" stroke-width="1.8"/></g>
<polygon points="1010.4,57.199999999999996 1013.6,57.199999999999996 1012,55.4" fill="#333"/>
<polygon points="1010.4,534.8000000000001 1013.6,534.8000000000001 1012,536.6" fill="#333"/>
<circle cx="1008.3" cy="560" r="5.6" fill="none" stroke="#1f5688" stroke-width="1.2"/><path d="M1005.6 561.2L1008.3 558.6L1011 561.2" stroke="#1f5688" stroke-width="1.2" fill="none"/>
<polygon points="510.4,547.6 514.2,547.6 512.3,545.4" fill="#151515"/>
</svg>
</div>
</body></html>
